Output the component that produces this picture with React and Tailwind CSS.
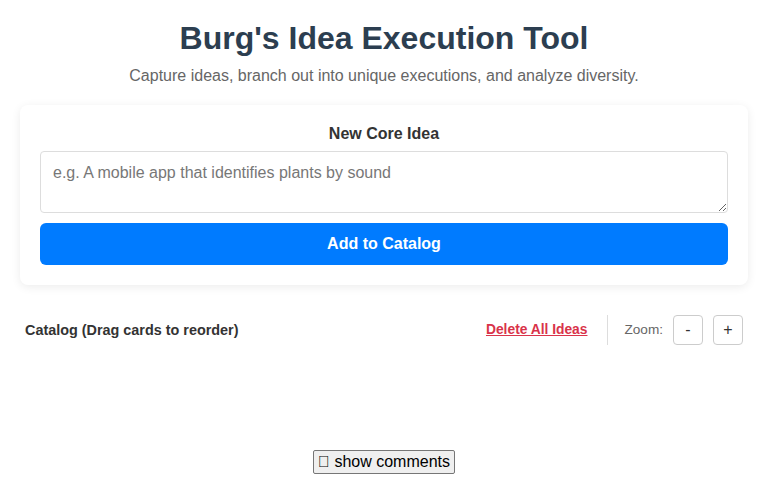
import React, { useState } from 'react';

const App = () => {
    const [idea, setIdea] = useState('');

    return (
        <div className="min-h-[480px] bg-white p-5 font-['Liberation_Sans',Arial,sans-serif] text-[#333]">
            <h1 className="text-center text-[32px] leading-[36px] font-bold text-[#2c3e50]">Burg's Idea Execution Tool</h1>
            <p className="mt-[10px] text-center text-[16px] leading-5 text-[#666]">
                Capture ideas, branch out into unique executions, and analyze diversity.
            </p>

            {/* input card */}
            <div className="mt-[19px] rounded-lg bg-white p-5 shadow-[0_2px_10px_rgba(0,0,0,0.08)]">
                <div className="mb-2 text-center text-[16px] leading-[18px] font-bold text-[#333]">New Core Idea</div>
                <textarea
                    value={idea}
                    onChange={e => setIdea(e.target.value)}
                    placeholder="e.g. A mobile app that identifies plants by sound"
                    className="block h-[62px] w-full rounded border border-[#ddd] px-3 pt-[11px] pb-[9px] text-[16px] leading-[20px] text-[#333] placeholder:text-[#777] outline-none"
                />
                <button className="mt-[10px] block h-[42px] w-full rounded-md bg-[#007bff] text-[16px] font-bold text-white">
                    Add to Catalog
                </button>
            </div>

            {/* catalog header */}
            <div className="mt-[30px] flex h-[30px] items-center justify-between px-[5px]">
                <div className="pt-px text-[14.4px] font-bold text-[#333]">Catalog (Drag cards to reorder)</div>
                <div className="flex h-full items-center">
                    <button className="pt-px text-[13.8px] font-bold text-[#d9334a] underline">Delete All Ideas</button>
                    <div className="ml-5 mr-4 h-full w-px bg-[#ddd]" />
                    <span className="mr-[10px] text-[13.6px] text-[#666]">Zoom:</span>
                    <button className="h-[30px] w-[30px] rounded border border-[#ccc] bg-white text-[16px] text-[#333]">-</button>
                    <button className="ml-[10px] h-[30px] w-[30px] rounded border border-[#ccc] bg-white text-[16px] text-[#333]">+</button>
                </div>
            </div>

            <div className="mt-[105px] flex justify-center">
                <button className="h-6 rounded-[2px] border border-[#767676] bg-[#efefef] px-1 text-[16px] leading-[20px] text-black">
                    {'\uE000'} show comments
                </button>
            </div>
        </div>
    );
};

export default App;
